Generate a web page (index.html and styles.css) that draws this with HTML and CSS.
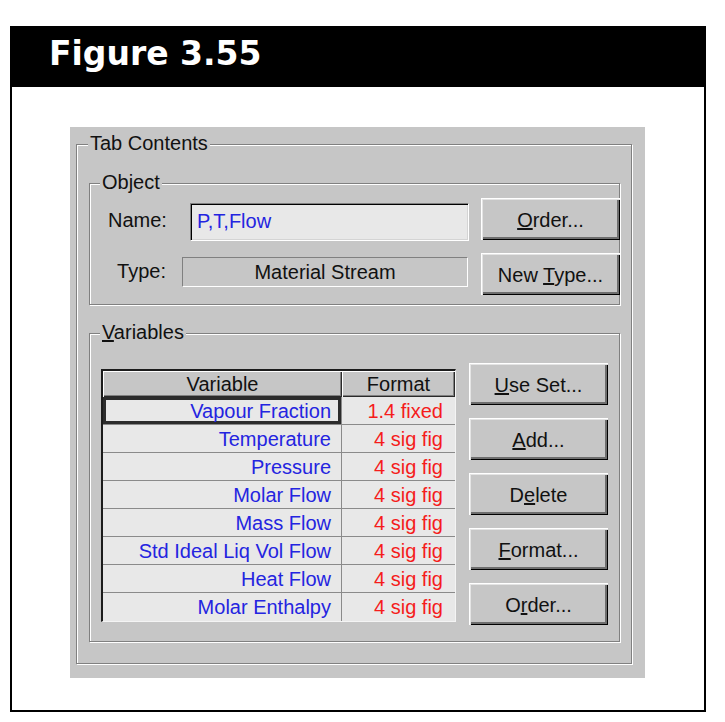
FILE: index.html
```html
<!DOCTYPE html>
<html>
<head>
<meta charset="utf-8">
<title>Figure 3.55</title>
<link rel="stylesheet" href="styles.css">
</head>
<body>
<div class="frame">
  <div class="fig-header"><h1 class="fig-title">Figure 3.55</h1></div>
  <div class="panel">
    <div class="group group-tab">
      <span class="legend">Tab Contents</span>
      <div class="group group-obj">
        <span class="legend">Object</span>
        <div class="obj-grid">
          <span class="lbl lbl-name">Name:</span>
          <div class="input">P,T,Flow</div>
          <button class="btn"><span><u>O</u>rder...</span></button>
          <span class="lbl lbl-type">Type:</span>
          <div class="typebox">Material Stream</div>
          <button class="btn"><span>New <u>T</u>ype...</span></button>
        </div>
      </div>
      <div class="group group-var">
        <span class="legend"><u>V</u>ariables</span>
        <div class="var-row">
          <div class="grid-table">
            <div class="th">Variable</div>
            <div class="th">Format</div>
            <div class="td var sel">Vapour Fraction</div>
            <div class="td fmt">1.4 fixed</div>
            <div class="td var">Temperature</div>
            <div class="td fmt">4 sig fig</div>
            <div class="td var">Pressure</div>
            <div class="td fmt">4 sig fig</div>
            <div class="td var">Molar Flow</div>
            <div class="td fmt">4 sig fig</div>
            <div class="td var">Mass Flow</div>
            <div class="td fmt">4 sig fig</div>
            <div class="td var">Std Ideal Liq Vol Flow</div>
            <div class="td fmt">4 sig fig</div>
            <div class="td var">Heat Flow</div>
            <div class="td fmt">4 sig fig</div>
            <div class="td var last">Molar Enthalpy</div>
            <div class="td fmt last">4 sig fig</div>
          </div>
          <div class="btn-col">
            <button class="btn"><span><u>U</u>se Set...</span></button>
            <button class="btn"><span><u>A</u>dd...</span></button>
            <button class="btn"><span>D<u>e</u>lete</span></button>
            <button class="btn"><span><u>F</u>ormat...</span></button>
            <button class="btn"><span>O<u>r</u>der...</span></button>
          </div>
        </div>
      </div>
    </div>
  </div>
</div>
</body>
</html>
```
FILE: styles.css
```css
* { box-sizing: border-box; }

body {
  margin: 0;
  background: #fff;
  font-family: "Liberation Sans", Arial, sans-serif;
  font-size: 20px;
  color: #111;
}

.frame {
  margin: 26px 0 0 10px;
  width: 696px;
  height: 686px;
  border: 2px solid #000;
}

.fig-header {
  height: 59px;
  background: #000;
  padding: 7px 0 0 37px;
}

.fig-title {
  margin: 0;
  font-family: "DejaVu Sans", Verdana, sans-serif;
  font-weight: bold;
  font-size: 33px;
  line-height: 38px;
  color: #fff;
}

.panel {
  margin: 40px 0 0 58px;
  width: 575px;
  height: 551px;
  background: #c6c6c6;
  padding: 17px 0 0 6px;
}

.group {
  position: relative;
  border: 1px solid #808080;
  box-shadow: inset 1px 1px 0 #fff, 1px 1px 0 #fff;
}

.legend {
  position: absolute;
  top: -13px;
  left: 10px;
  padding: 0 2px;
  background: #c6c6c6;
  line-height: 22px;
  white-space: nowrap;
}

.group-tab {
  width: 556px;
  height: 520px;
  padding: 38px 0 0 12px;
}

.group-tab > .legend { left: 11px; }

.group-obj {
  width: 531px;
  height: 122px;
  padding: 14px 0 0 18px;
}

.group-var {
  margin-top: 28px;
  width: 531px;
  height: 309px;
  padding: 29px 0 0 11px;
}

.obj-grid {
  display: grid;
  grid-template-columns: 62px 287px 139px;
  grid-template-rows: 42px 42px;
  column-gap: 12px;
  row-gap: 13px;
}

.lbl {
  text-align: right;
  padding-right: 4px;
  line-height: 22px;
  white-space: nowrap;
  align-self: start;
}

.lbl-name { margin-top: 11px; }
.lbl-type { margin-top: 7px; }

.input {
  margin: 5px 0 0 8px;
  height: 38px;
  background: #e8e8e8;
  border: 1px solid;
  border-color: #808080 #fff #fff #808080;
  box-shadow: inset 1px 1px 0 #000, inset -1px -1px 0 #d4d4d4;
  padding: 6px 0 0 6px;
  line-height: 22px;
  color: #2424e0;
}

.typebox {
  margin-top: 4px;
  width: 286px;
  height: 30px;
  border: 1px solid;
  border-color: #808080 #fff #fff #808080;
  text-align: center;
  line-height: 28px;
}

.btn {
  display: flex;
  align-items: center;
  justify-content: center;
  width: 139px;
  height: 42px;
  padding: 1px 0 0;
  border: none;
  background: #c6c6c6;
  font-family: "Liberation Sans", Arial, sans-serif;
  font-size: 20px;
  line-height: 22px;
  color: #111;
  white-space: pre;
  box-shadow: inset 1px 1px 0 #fff, inset 2px 2px 0 #e4e4e4, inset -1px -1px 0 #000, inset -3px -3px 0 #6e6e6e;
}

.var-row {
  display: flex;
  align-items: flex-start;
  gap: 13px;
}

.grid-table {
  margin-top: 6px;
  width: 355px;
  display: grid;
  grid-template-columns: 239px 113px;
  border-top: 2px solid #1c1c1c;
  border-left: 2px solid #1c1c1c;
  border-right: 1px solid #f4f4f4;
  border-bottom: 1px solid #f4f4f4;
}

.th {
  height: 26px;
  line-height: 26px;
  text-align: center;
  background: #c6c6c6;
  box-shadow: inset 1px 1px 0 #fff, inset -1px -1px 0 #2a2a2a, inset -2px -2px 0 #808080;
}

.td {
  height: 28px;
  padding-top: 1px;
  line-height: 26px;
  text-align: right;
  background: #e8e8e8;
  border-bottom: 1px solid #8a8a8a;
  white-space: nowrap;
}

.td.last { border-bottom: none; }

.td.var {
  border-right: 1px solid #8a8a8a;
  padding-right: 10px;
  color: #2424e0;
}

.td.fmt {
  padding-right: 12px;
  color: #f51c1c;
}

.td.sel {
  box-shadow: inset 0 0 0 3px #2c2c2c;
}

.btn-col {
  display: flex;
  flex-direction: column;
  gap: 13px;
  width: 139px;
}
```
